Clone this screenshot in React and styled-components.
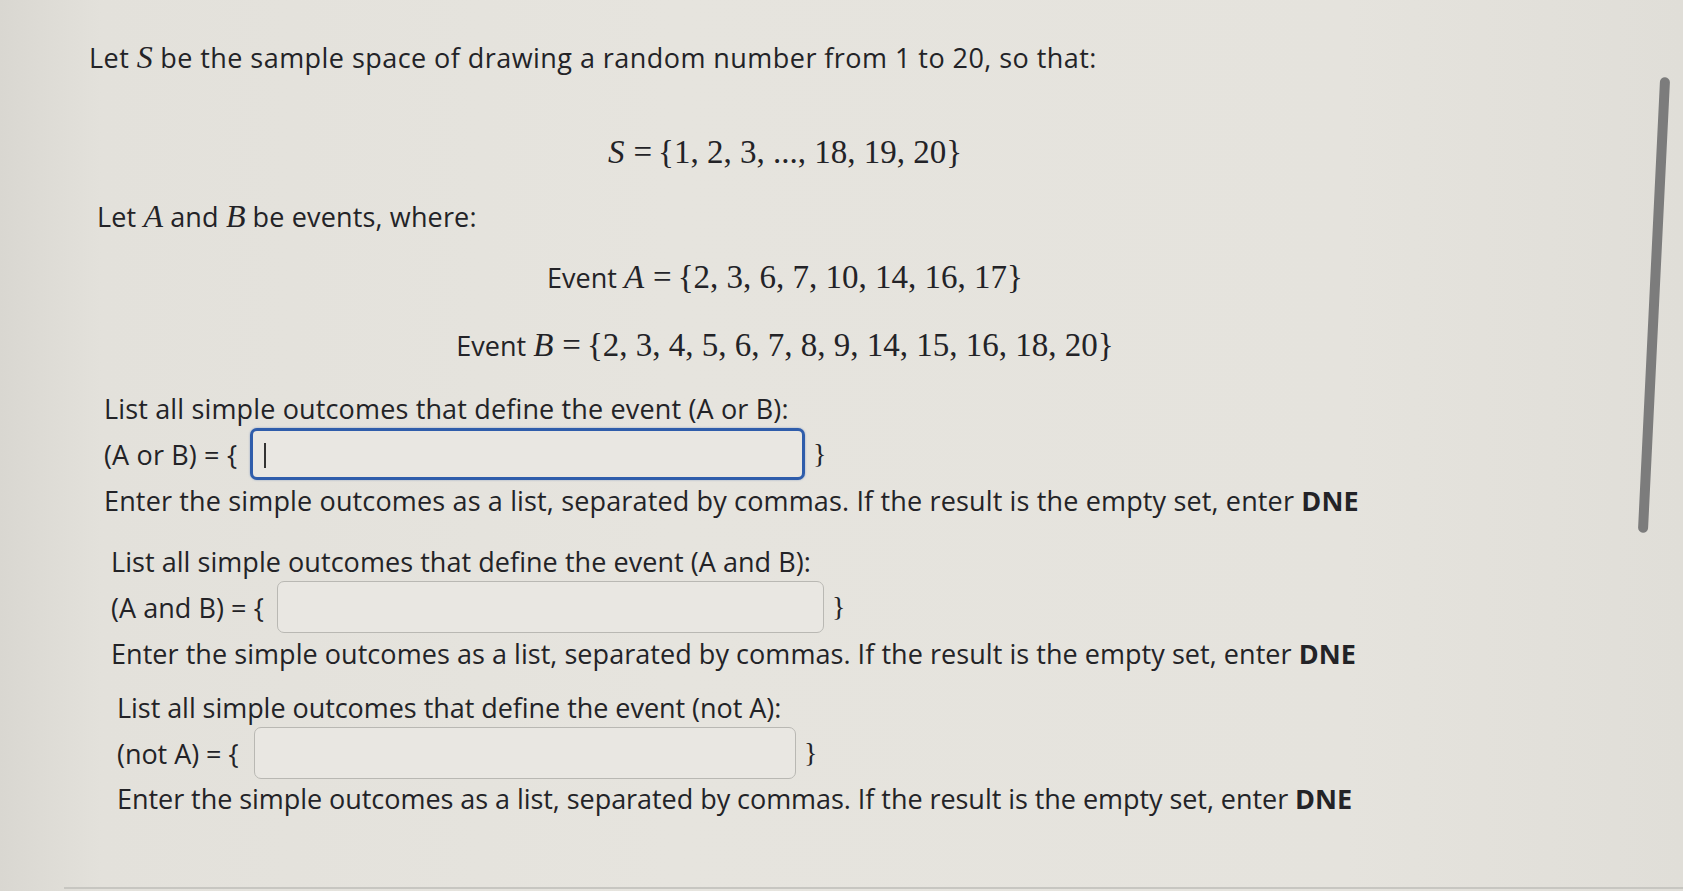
import React from "react";
import styled, { createGlobalStyle } from "styled-components";

const GlobalStyle = createGlobalStyle`
  html, body {
    margin: 0;
    padding: 0;
    background: #e4e2dc;
  }
  body {
    font-family: "Open Sans", "DejaVu Sans", sans-serif;
    color: #232327;
  }
`;

const Page = styled.div`
  position: relative;
  width: 1683px;
  height: 891px;
  overflow: hidden;
  background: linear-gradient(
    90deg,
    #d9d7d1 0%,
    #e3e1db 6%,
    #e6e4de 40%,
    #e5e3dd 80%,
    #e0ded8 100%
  );
`;

const Content = styled.div`
  width: 1392px;
  padding: 39px 0 0 89px;
`;

const Line = styled.p`
  margin: ${(p) => p.$top || 0}px 0 0 ${(p) => p.$indent || 0}px;
  font-size: 27px;
  letter-spacing: ${(p) => p.$spacing ?? 0.15}px;
  line-height: 36px;
  white-space: nowrap;
`;

const Var = styled.span`
  font-family: "Liberation Serif", "DejaVu Serif", serif;
  font-style: italic;
  font-size: 32px;
  letter-spacing: 0;
`;

const Display = styled.div`
  margin-top: ${(p) => p.$top}px;
  text-align: center;
  font-family: "Liberation Serif", "DejaVu Serif", serif;
  font-size: 33px;
  line-height: 40px;
  white-space: nowrap;

  i {
    margin-right: 3px;
  }
`;

const Eq = styled.span`
  margin: 0 6px;
`;

const Word = styled.span`
  font-family: "Open Sans", "DejaVu Sans", sans-serif;
  font-size: 27px;
  margin-right: 7px;
`;

const Block = styled.section`
  margin: ${(p) => p.$top}px 0 0 ${(p) => p.$indent}px;
  display: flex;
  flex-direction: column;
  letter-spacing: ${(p) => p.$spacing}px;
`;

const AnswerRow = styled.div`
  display: flex;
  align-items: center;
  gap: 8px;
  margin-top: 1px;
  font-size: 27px;
  white-space: nowrap;
`;

const Label = styled.span`
  width: ${(p) => p.$w}px;
`;

const Field = styled.div`
  position: relative;
  width: ${(p) => p.$w}px;
  height: 52px;
  box-sizing: border-box;
  border-radius: 7px;
  background: #e9e7e2;
  border: ${(p) => (p.$focused ? "3px solid #2f5dab" : "1px solid #b9b8b3")};
  box-shadow: ${(p) =>
    p.$focused ? "0 0 2px rgba(47, 93, 171, 0.5)" : "none"};
`;

const Input = styled.input`
  width: 100%;
  height: 100%;
  box-sizing: border-box;
  border: none;
  outline: none;
  background: transparent;
  padding: 0 12px;
  font: inherit;
  color: inherit;
`;

const Caret = styled.span`
  position: absolute;
  left: 11px;
  top: 12px;
  width: 2px;
  height: 25px;
  background: #333;
`;

const Brace = styled.span`
  font-family: "Liberation Serif", serif;
  font-size: 28px;
`;

const Note = styled.p`
  margin: ${(p) => p.$top}px 0 0;
  font-size: 27px;
  line-height: 36px;
  white-space: nowrap;

  b {
    font-weight: 700;
  }
`;

const Rule = styled.div`
  margin: 70px 0 0 64px;
  height: 2px;
  background: #c7c6c1;
`;

const Scrollbar = styled.div`
  position: absolute;
  left: 1649px;
  top: 77px;
  width: 10px;
  height: 456px;
  border-radius: 5px;
  background: #7c7c7c;
  transform: rotate(2.8deg);
`;

const questions = [
  { event: "(A or B)", label: 138, field: 555, top: 25, note: 3, indent: 15, spacing: 0.15, focused: true },
  { event: "(A and B)", label: 158, field: 547, top: 25, note: 3, indent: 22, spacing: 0.05 },
  { event: "(not A)", label: 129, field: 542, top: 18, note: 2, indent: 28, spacing: -0.05 },
];

const Question = ({ event, label, field, top, note, indent, spacing, focused }) => (
  <Block $top={top} $indent={indent} $spacing={spacing}>
    <Line $spacing={spacing}>
      List all simple outcomes that define the event {event}:
    </Line>
    <AnswerRow>
      <Label $w={label}>{event} = {"{"}</Label>
      <Field $w={field} $focused={focused}>
        <Input type="text" aria-label={event} />
        {focused && <Caret />}
      </Field>
      <Brace>{"}"}</Brace>
    </AnswerRow>
    <Note $top={note}>
      Enter the simple outcomes as a list, separated by commas. If the result
      is the empty set, enter <b>DNE</b>
    </Note>
  </Block>
);

export default function App() {
  return (
    <Page>
      <GlobalStyle />
      <Content>
        <Line $spacing={0.45}>
          Let <Var>S</Var> be the sample space of drawing a random number from
          1 to 20, so that:
        </Line>
        <Display $top={56}>
          <i>S</i>
          <Eq>=</Eq>
          {"{"}1, 2, 3, ..., 18, 19, 20{"}"}
        </Display>
        <Line $top={26} $indent={8}>
          Let <Var>A</Var> and <Var>B</Var> be events, where:
        </Line>
        <Display $top={22}>
          <Word>Event</Word>
          <i>A</i>
          <Eq>=</Eq>
          {"{"}2, 3, 6, 7, 10, 14, 16, 17{"}"}
        </Display>
        <Display $top={27}>
          <Word>Event</Word>
          <i>B</i>
          <Eq>=</Eq>
          {"{"}2, 3, 4, 5, 6, 7, 8, 9, 14, 15, 16, 18, 20{"}"}
        </Display>
        {questions.map((q) => (
          <Question key={q.event} {...q} />
        ))}
      </Content>
      <Rule />
      <Scrollbar />
    </Page>
  );
}
